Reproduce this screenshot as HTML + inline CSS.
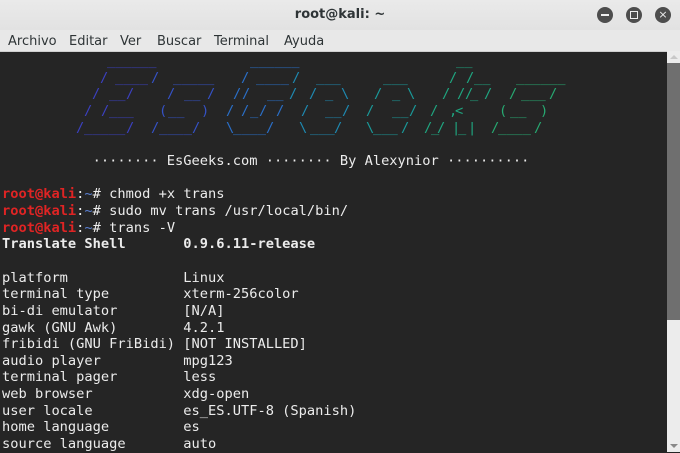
<!DOCTYPE html>
<html><head><meta charset="utf-8"><style>
*{margin:0;padding:0}
body{width:680px;height:452px;overflow:hidden;background:#252525;position:relative;font-family:"DejaVu Sans Mono","Liberation Mono",monospace}
#title{position:absolute;left:0;top:0;width:680px;height:30px;background:linear-gradient(#eaeaea,#e2e2e2);font-family:"DejaVu Sans","Liberation Sans",sans-serif}
#title .t{position:absolute;left:0;width:680px;top:7px;text-align:center;font-size:13px;font-weight:bold;color:#2e3436}
.btn{position:absolute;top:7px;width:16px;height:16px;border-radius:50%;background:#4d4d4d}
#menu{position:absolute;left:0;top:30px;width:680px;height:21px;background:#e8e8e8;border-bottom:1px solid #cfcfcf;font-family:"DejaVu Sans","Liberation Sans",sans-serif;font-size:13px;color:#2e3436}
#menu span{position:absolute;top:4px}
#sb{position:absolute;left:667px;top:51px;width:13px;height:401px;background:#ececec}
#thumb{position:absolute;left:667px;top:63px;width:13px;height:257px;background:#6f6f6f}
.term{position:absolute;left:2px;top:53px;font-size:13.7px;line-height:16.65px;color:#ececec;white-space:pre}
.a{position:absolute;font-size:13.7px;line-height:16.65px;white-space:pre}
.r0{top:53px}.r1{top:69.65px}.r2{top:86.3px}.r3{top:102.95px}.r4{top:119.6px}
.c1{color:#3b40c0}.c2{color:#3552c6}.c3{color:#2a6fc8}.c4{color:#1e8ab2}.c5{color:#1a9a9a}.c6{color:#1fa680}.c7{color:#27aa72}
.red{color:#e02424;font-weight:bold}.bl{color:#5a7fd0}
b{font-weight:bold}
</style></head><body>
<div id="title"><div class="t">root@kali: ~</div>
<div class="btn" style="left:597px"><div style="position:absolute;left:4px;top:7px;width:8px;height:2px;background:#eee"></div></div>
<div class="btn" style="left:626px"><div style="position:absolute;left:4px;top:4px;width:6px;height:6px;border:1px solid #eee"></div></div>
<div class="btn" style="left:655px"><div style="position:absolute;left:3px;top:0;width:10px;height:16px;color:#eee;font-size:11px;line-height:16px;text-align:center;font-family:'DejaVu Sans',sans-serif">×</div></div>
</div>
<div id="menu"><span style="left:8px">Archivo</span><span style="left:69px">Editar</span><span style="left:120px">Ver</span><span style="left:157px">Buscar</span><span style="left:214px">Terminal</span><span style="left:284px">Ayuda</span></div>
<div id="sb"></div><div id="thumb"></div>
<div style="position:absolute;left:670px;top:55px;width:0;height:0;border-left:4px solid transparent;border-right:4px solid transparent;border-bottom:4px solid #c8c8c8"></div>
<div style="position:absolute;left:670px;top:444px;width:0;height:0;border-left:4px solid transparent;border-right:4px solid transparent;border-top:4px solid #888"></div>

<span class="a r0 c1" style="left:107px">______</span>
<span class="a r0 c3" style="left:250px">______</span>
<span class="a r0 c6" style="left:456px">__</span>

<span class="a r1 c1" style="left:100px">/</span>
<span class="a r1 c1" style="left:115px">____</span>
<span class="a r1 c2" style="left:151px">/</span>
<span class="a r1 c2" style="left:173px">_____</span>
<span class="a r1 c3" style="left:241px">/</span>
<span class="a r1 c3" style="left:256px">____</span>
<span class="a r1 c4" style="left:292px">/</span>
<span class="a r1 c4" style="left:316px">___</span>
<span class="a r1 c5" style="left:383px">___</span>
<span class="a r1 c6" style="left:449px">/</span>
<span class="a r1 c6" style="left:466px">/</span>
<span class="a r1 c6" style="left:474px">__</span>
<span class="a r1 c7" style="left:516px">______</span>

<span class="a r2 c1" style="left:92px">/</span>
<span class="a r2 c1" style="left:109px">__</span>
<span class="a r2 c1" style="left:126px">/</span>
<span class="a r2 c2" style="left:167px">/</span>
<span class="a r2 c2" style="left:184px">__</span>
<span class="a r2 c2" style="left:207px">/</span>
<span class="a r2 c3" style="left:233px">/</span>
<span class="a r2 c3" style="left:242px">/</span>
<span class="a r2 c3" style="left:267px">__</span>
<span class="a r2 c4" style="left:289px">/</span>
<span class="a r2 c4" style="left:309px">/</span>
<span class="a r2 c4" style="left:325px">_</span>
<span class="a r2 c4" style="left:341px">\</span>
<span class="a r2 c5" style="left:374px">/</span>
<span class="a r2 c5" style="left:392px">_</span>
<span class="a r2 c5" style="left:407px">\</span>
<span class="a r2 c6" style="left:442px">/</span>
<span class="a r2 c6" style="left:457px">/</span>
<span class="a r2 c6" style="left:465px">/</span>
<span class="a r2 c6" style="left:470px">_</span>
<span class="a r2 c6" style="left:484px">/</span>
<span class="a r2 c7" style="left:509px">/</span>
<span class="a r2 c7" style="left:521px">___</span>
<span class="a r2 c7" style="left:549px">/</span>

<span class="a r3 c1" style="left:84px">/</span>
<span class="a r3 c1" style="left:101px">/</span>
<span class="a r3 c1" style="left:109px">___</span>
<span class="a r3 c2" style="left:159px">(</span>
<span class="a r3 c2" style="left:168px">__</span>
<span class="a r3 c2" style="left:201px">)</span>
<span class="a r3 c3" style="left:226px">/</span>
<span class="a r3 c3" style="left:241px">/</span>
<span class="a r3 c3" style="left:250px">_</span>
<span class="a r3 c3" style="left:259px">/</span>
<span class="a r3 c3" style="left:276px">/</span>
<span class="a r3 c4" style="left:301px">/</span>
<span class="a r3 c4" style="left:325px">__</span>
<span class="a r3 c4" style="left:342px">/</span>
<span class="a r3 c5" style="left:366px">/</span>
<span class="a r3 c5" style="left:392px">__</span>
<span class="a r3 c5" style="left:409px">/</span>
<span class="a r3 c6" style="left:430px">/</span>
<span class="a r3 c6" style="left:449px">,</span>
<span class="a r3 c6" style="left:455px">&lt;</span>
<span class="a r3 c7" style="left:499px">(</span>
<span class="a r3 c7" style="left:510px">__</span>
<span class="a r3 c7" style="left:540px">)</span>

<span class="a r4 c1" style="left:76px">/</span>
<span class="a r4 c1" style="left:84px">_____</span>
<span class="a r4 c1" style="left:126px">/</span>
<span class="a r4 c2" style="left:151px">/</span>
<span class="a r4 c2" style="left:159px">____</span>
<span class="a r4 c2" style="left:192px">/</span>
<span class="a r4 c3" style="left:226px">\</span>
<span class="a r4 c3" style="left:233px">____</span>
<span class="a r4 c3" style="left:266px">/</span>
<span class="a r4 c4" style="left:299px">\</span>
<span class="a r4 c4" style="left:310px">___</span>
<span class="a r4 c4" style="left:334px">/</span>
<span class="a r4 c5" style="left:366px">\</span>
<span class="a r4 c5" style="left:373px">___</span>
<span class="a r4 c5" style="left:401px">/</span>
<span class="a r4 c6" style="left:424px">/</span>
<span class="a r4 c6" style="left:431px">_</span>
<span class="a r4 c6" style="left:437px">/</span>
<span class="a r4 c6" style="left:452px">|</span>
<span class="a r4 c6" style="left:458px">_</span>
<span class="a r4 c6" style="left:468px">|</span>
<span class="a r4 c7" style="left:491px">/</span>
<span class="a r4 c7" style="left:498px">____</span>
<span class="a r4 c7" style="left:534px">/</span>

<div class="term">





           ········ EsGeeks.com ········ By Alexynior ··········

<span class="red">root@kali</span>:<span class="bl">~</span># chmod +x trans
<span class="red">root@kali</span>:<span class="bl">~</span># sudo mv trans /usr/local/bin/
<span class="red">root@kali</span>:<span class="bl">~</span># trans -V
<b>Translate Shell       0.9.6.11-release</b>

platform              Linux
terminal type         xterm-256color
bi-di emulator        [N/A]
gawk (GNU Awk)        4.2.1
fribidi (GNU FriBidi) [NOT INSTALLED]
audio player          mpg123
terminal pager        less
web browser           xdg-open
user locale           es_ES.UTF-8 (Spanish)
home language         es
source language       auto</div>
</body></html>
